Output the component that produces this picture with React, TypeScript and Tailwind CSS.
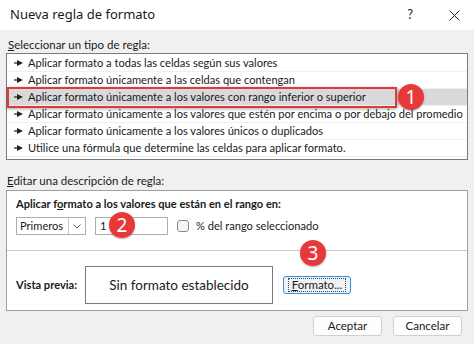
import React from "react";

const Arrow = () => (
  <svg width="9" height="6" viewBox="0 0 9 6" className="shrink-0">
    <rect x="0" y="2.4" width="4" height="1.2" fill="#222" />
    <polygon points="3,0 9,3 3,6" fill="#222" />
  </svg>
);

const rows = [
  "Aplicar formato a todas las celdas según sus valores",
  "Aplicar formato únicamente a las celdas que contengan",
  "Aplicar formato únicamente a los valores con rango inferior o superior",
  "Aplicar formato únicamente a los valores que estén por encima o por debajo del promedio",
  "Aplicar formato únicamente a los valores únicos o duplicados",
  "Utilice una fórmula que determine las celdas para aplicar formato.",
];

const Badge = ({ n, cls }: { n: string; cls: string }) => (
  <div
    className={
      "absolute w-[26px] h-[26px] rounded-full bg-[#e8393a] text-white flex items-center justify-center text-[19px] leading-none shadow-[0_1px_2px_rgba(0,0,0,0.3)] " +
      cls
    }
    style={{ fontFamily: '"Noto Sans", sans-serif' }}
  >
    {n}
  </div>
);

export default function App() {
  return (
    <div
      className="relative w-[474px] h-[344px] overflow-hidden bg-[#f0f0f0] text-[#1a1a1a] text-[11.1px]"
      style={{ fontFamily: 'Lato, "Noto Sans", sans-serif' }}
    >
      {/* title bar */}
      <div className="h-[30px] bg-white flex items-center pl-[10px] pr-[14px]">
        <div className="text-[13px] flex-1" style={{ fontFamily: '"Noto Sans", sans-serif' }}>
          Nueva regla de formato
        </div>
        <div className="text-[13px] mr-[36px]">?</div>
        <svg width="11" height="11" viewBox="0 0 11 11">
          <path d="M0.5 0.5 L10.5 10.5 M10.5 0.5 L0.5 10.5" stroke="#222" strokeWidth="1" />
        </svg>
      </div>

      <div className="px-[6px]">
        <div className="h-[23px] flex items-end pb-[1px] pl-[2px] leading-[14px] text-[11.5px]">
          <span>
            <span className="underline">S</span>eleccionar un tipo de regla:
          </span>
        </div>
        <div className="border border-[#7a7a7a] bg-white h-[107px] pt-[1px]">
          {rows.map((r, i) => (
            <div
              key={i}
              className={
                "h-[17px] flex items-center gap-[5px] pl-[7px] border-b border-[#f0f0f0] whitespace-nowrap " +
                (i === 2 ? "bg-[#d9d9dc]" : "")
              }
            >
              <Arrow />
              <span className="leading-none">{r}</span>
            </div>
          ))}
        </div>

        <div className="h-[30px] flex items-end pb-[2px] pl-[1px] leading-[14px] text-[11.5px]">
          <span>
            <span className="underline">E</span>ditar una descripción de regla:
          </span>
        </div>
        <div className="border border-[#a0a0a0] bg-white h-[121px] flex flex-col">
          <div className="pl-[9px] pt-[6px] font-bold leading-[14px] whitespace-nowrap">
            Aplicar f<span className="underline">o</span>rmato a los valores que están en el rango en:
          </div>
          <div className="flex items-center pl-[9px] mt-[6px] h-[18px]">
            <div className="w-[70px] h-[18px] border border-[#adadad] bg-white flex items-center">
              <span className="pl-[3px] flex-1">Primeros</span>
              <div className="w-[17px] h-full border-l border-[#c8c8c8] flex items-center justify-center">
                <svg width="8" height="5" viewBox="0 0 8 5">
                  <path d="M0.5 0.5 L4 4 L7.5 0.5" stroke="#555" fill="none" strokeWidth="1" />
                </svg>
              </div>
            </div>
            <div className="ml-[9px] w-[73px] h-[18px] border border-[#adadad] bg-white flex items-center pl-[4px]">
              1
            </div>
            <div className="ml-[9px] w-[12px] h-[12px] rounded-[3px] border border-[#8a8a8a] bg-[#f6f6f6]" />
            <span className="ml-[7px] whitespace-nowrap">
              % del ran<span className="underline">g</span>o seleccionado
            </span>
          </div>
          <div className="mt-[15px] mx-0 border-t border-[#c8c8c8]" />
          <div className="flex items-center pl-[9px] mt-[15px]">
            <span className="font-bold w-[69px] whitespace-nowrap">Vista previa:</span>
            <div className="w-[188px] h-[38px] border border-[#7a7a7a] bg-white flex items-center justify-center text-[13.5px]">
              Sin formato establecido
            </div>
            <div className="ml-[10px] w-[68px] h-[18px] rounded-[3px] border border-[#3b8fd9] bg-[#eef3f8] flex items-center justify-center">
              <div className="border border-dotted border-[#444] px-[3px] leading-[12px] text-[11.5px]">
                <span className="underline">F</span>ormato...
              </div>
            </div>
          </div>
        </div>

        <div className="flex justify-end gap-[11px] mt-[5px] pr-[6px] text-[11.5px]">
          <div className="w-[69px] h-[20px] rounded-[3px] border border-[#d0d0d0] bg-[#fdfdfd] flex items-center justify-center">
            Aceptar
          </div>
          <div className="w-[69px] h-[20px] rounded-[3px] border border-[#d0d0d0] bg-[#fdfdfd] flex items-center justify-center">
            Cancelar
          </div>
        </div>
      </div>

      {/* annotations */}
      <div className="absolute left-[7px] top-[87px] w-[390px] h-[21px] border-2 border-[#e0393b] shadow-[0_1px_3px_rgba(0,0,0,0.35)]" />
      <Badge n="1" cls="left-[398px] top-[84px]" />
      <Badge n="2" cls="left-[109px] top-[212px]" />
      <Badge n="3" cls="left-[300px] top-[240px]" />
    </div>
  );
}
